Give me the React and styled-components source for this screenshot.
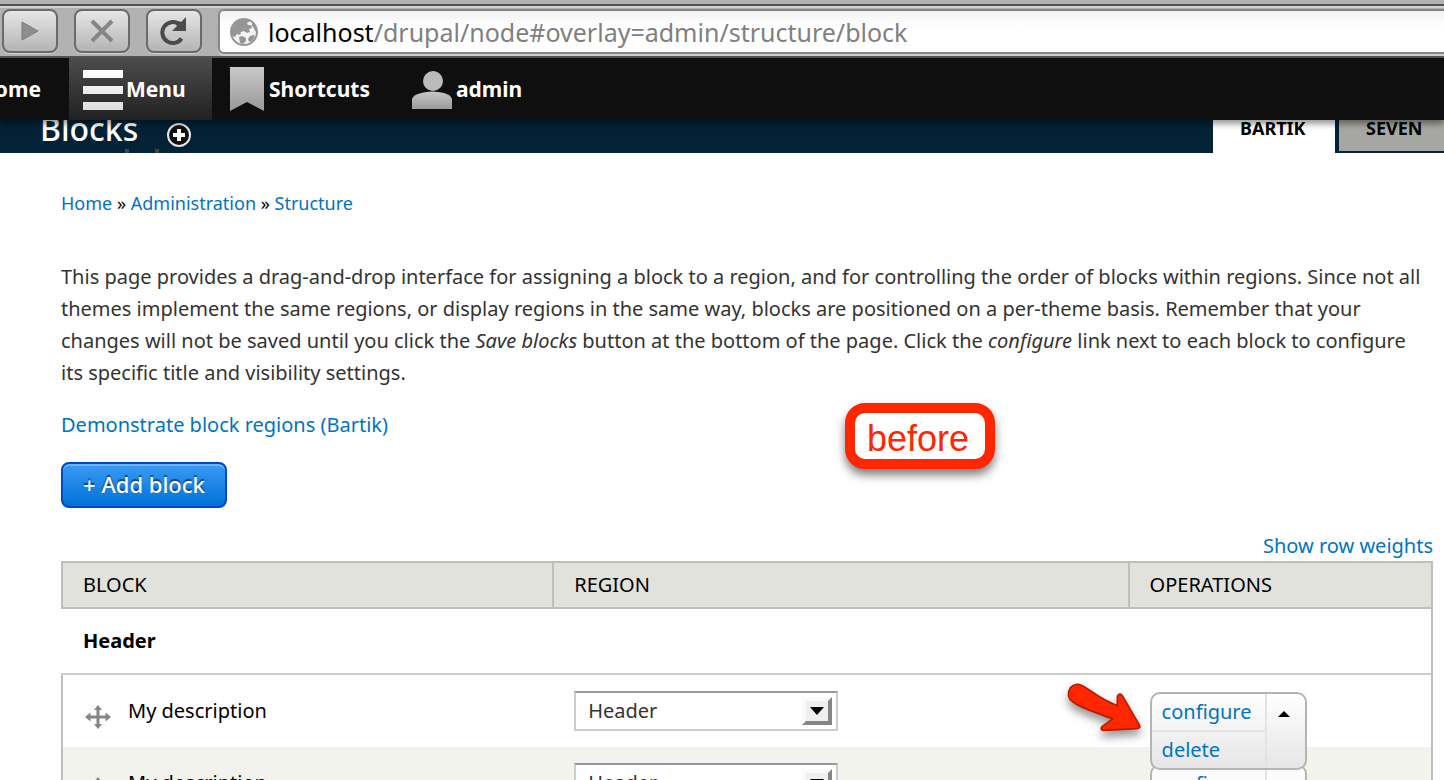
import React from 'react';
import styled, { createGlobalStyle } from 'styled-components';

const BLOCKS = [
  { id: 'block-1', name: 'My description', region: 'Header', open: true },
  { id: 'block-2', name: 'My description', region: 'Header', open: false },
];

const REGIONS = ['Header', 'Help', 'Featured', 'Content', 'Footer'];

const App = () => {
  return (
    <Page>
      <GlobalStyle />
      <BrowserBar />
      <AdminBar />
      <OverlayHeader>
        <PageTitle>Blocks</PageTitle>
        <AddShortcut type="button" aria-label="Add to shortcuts">
          <svg width="26" height="26" viewBox="0 0 26 26">
            <circle cx="13" cy="13" r="11" fill="#111" stroke="#e8e8e8" strokeWidth="2" />
            <path d="M13 7v12M7 13h12" stroke="#fff" strokeWidth="4" />
          </svg>
        </AddShortcut>
        <UnderlyingMarks aria-hidden="true" />
        <Tabs>
          <Tab href="#bartik" $active>BARTIK</Tab>
          <Tab href="#seven">SEVEN</Tab>
        </Tabs>
      </OverlayHeader>
      <Content>
        <Breadcrumb aria-label="Breadcrumb">
          <Link href="#home">Home</Link> » <Link href="#admin">Administration</Link> »{' '}
          <Link href="#structure">Structure</Link>
        </Breadcrumb>
        <HelpText>
          This page provides a drag-and-drop interface for assigning a block to a region, and for
          controlling the order of blocks within regions. Since not all
          <br />
          themes implement the same regions, or display regions in the same way, blocks are
          positioned on a per-theme basis. Remember that your
          <br />
          changes will not be saved until you click the <em>Save blocks</em> button at the bottom of
          the page. Click the <em>configure</em> link next to each block to configure
          <br />
          its specific title and visibility settings.
        </HelpText>
        <DemoLine>
          <Link href="#demo">Demonstrate block regions (Bartik)</Link>
          <Note>before</Note>
        </DemoLine>
        <AddButton type="button">+ Add block</AddButton>
        <WeightsLine>
          <Link href="#weights">Show row weights</Link>
        </WeightsLine>
        <BlockTable />
      </Content>
    </Page>
  );
};

const BrowserBar = () => (
  <Browser>
    <BrowserButton type="button" aria-label="Forward">
      <svg width="20" height="24" viewBox="0 0 20 24">
        <path d="M2 3L18 12L2 21Z" fill="#8e8e8e" stroke="#7b7b7b" />
      </svg>
    </BrowserButton>
    <BrowserButton type="button" aria-label="Stop">
      <svg width="26" height="26" viewBox="0 0 26 26">
        <path d="M3 3L23 23M23 3L3 23" stroke="#858585" strokeWidth="4" />
      </svg>
    </BrowserButton>
    <BrowserButton type="button" aria-label="Reload">
      <svg width="28" height="30" viewBox="0 0 28 30">
        <path d="M21.500 22.500A10.500 10.500 0 1 1 19 8" fill="none" stroke="#4a4a4a" strokeWidth="4" />
        <path d="M26 1V15H12L17 10L15.500 7.500L19 5L21 6Z" fill="#4a4a4a" />
      </svg>
    </BrowserButton>
    <Address>
      <svg width="28" height="28" viewBox="0 0 28 28" aria-hidden="true">
        <circle cx="14" cy="14" r="13" fill="#f4f4f4" stroke="#969696" strokeWidth="2" />
        <path d="M2 10L5 5L9 2L15 1L20 3L17 5L18 7L21 7L22 10L19 11L20 14L17 15L14 13L11 14L10 17L7 16L5 19L2 18L1 14Z" fill="#969696" />
        <path d="M22 4L26 9L27 14L25 13L24 10L22 8Z" fill="#969696" />
        <path d="M9 19L12 18L16 20L16 23L13 26L10 25Z" fill="#969696" />
        <path d="M20 18L24 17L25 19L22 23L19 24L18 21Z" fill="#969696" />
      </svg>
      <span>
        <b>localhost</b>/drupal/node#overlay=admin/structure/block
      </span>
    </Address>
  </Browser>
);

const AdminBar = () => (
  <Toolbar>
    <HomeItem href="#home">Home</HomeItem>
    <MenuItem href="#menu">
      <svg width="40" height="44" viewBox="0 0 40 44" aria-hidden="true">
        <linearGradient id="bars" x2="0" y2="1">
          <stop offset="0" stopColor="#fff" />
          <stop offset="1" stopColor="#ddd" />
        </linearGradient>
        <path d="M0 3H40V11H0ZM0 19H40V27H0ZM0 35H40V43H0Z" fill="url(#bars)" />
      </svg>
      Menu
    </MenuItem>
    <ShortcutItem href="#shortcuts">
      <svg width="34" height="44" viewBox="0 0 34 44" aria-hidden="true">
        <linearGradient id="metal" x2="0" y2="1">
          <stop offset="0" stopColor="#c8c8c8" />
          <stop offset="1" stopColor="#999" />
        </linearGradient>
        <path d="M0 0H34V44L17 35L0 44Z" fill="url(#metal)" />
      </svg>
      Shortcuts
    </ShortcutItem>
    <UserItem href="#user">
      <svg width="40" height="40" viewBox="0 0 40 40" aria-hidden="true">
        <circle cx="21" cy="12" r="10" fill="#bbb" />
        <path d="M0 40V30Q1 26 9 24Q15 22.500 20 22.500Q26 22.500 32 24Q39 26 40 30V40Z" fill="url(#metal)" />
      </svg>
      admin
    </UserItem>
  </Toolbar>
);

const BlockTable = () => (
  <Table>
    <colgroup>
      <Col $width="36%" />
      <Col $width="42%" />
      <Col $width="22%" />
    </colgroup>
    <thead>
      <tr>
        <Th>BLOCK</Th>
        <Th>REGION</Th>
        <Th>OPERATIONS</Th>
      </tr>
    </thead>
    <tbody>
      <tr>
        <RegionTitle colSpan={3}>Header</RegionTitle>
      </tr>
      {BLOCKS.map((block, i) => (
        <Row key={block.id} $even={i % 2 === 1}>
          <Td>
            <BlockName>
              <svg width="26" height="24" viewBox="0 0 26 24" aria-hidden="true">
                <path
                  d="M13 0L17 5H14.500V10.500H20.500V7.500L26 12L20.500 16.500V13.500H14.500V19H17L13 24L9 19H11.500V13.500H5.500V16.500L0 12L5.500 7.500V10.500H11.500V5H9Z"
                  fill="#858585"
                />
              </svg>
              <label htmlFor={block.id}>{block.name}</label>
            </BlockName>
          </Td>
          <Td>
            <SelectWrap>
              <Select id={block.id} defaultValue={block.region}>
                {REGIONS.map((region) => (
                  <option key={region}>{region}</option>
                ))}
              </Select>
              <SelectArrow>
                <svg width="14" height="8" viewBox="0 0 14 8">
                  <path d="M0 0H14L7 8Z" fill="#000" />
                </svg>
              </SelectArrow>
            </SelectWrap>
          </Td>
          <Td>
            <Operations>
              <DropButton $raised={block.open}>
                <DropLinks>
                  <DropLink href="#configure">configure</DropLink>
                  <DropLink href="#delete">delete</DropLink>
                </DropLinks>
                <DropToggle type="button" aria-label="List additional actions">
                  <svg width="12" height="6" viewBox="0 0 12 6">
                    <path d="M0 6L6 0L12 6Z" fill="#000" />
                  </svg>
                </DropToggle>
              </DropButton>
              {block.open && (
                <Pointer width="75" height="50" viewBox="50 70 225 150" aria-hidden="true">
                  <path
                    d="M60 84C68 73 83 72 96 78C120 90 142 115 201 138V112C201 103 211 100 216 108L267 196C271 203 267 206 260 207L160 212C152 212 150 206 155 201L187 178C145 160 95 148 68 127C51 116 51 98 60 84Z"
                    fill="#ff2600"
                    stroke="#b81c00"
                    strokeWidth="5"
                  />
                </Pointer>
              )}
            </Operations>
          </Td>
        </Row>
      ))}
    </tbody>
  </Table>
);

const GlobalStyle = createGlobalStyle`
  * {
    box-sizing: border-box;
  }

  body {
    margin: 0;
    background: #fff;
    color: #000;
    font: 20px/32px 'Noto Sans', 'Open Sans', sans-serif;
  }

  svg {
    display: block;
    flex: none;
  }

  button,
  select {
    font: inherit;
  }
`;

const Page = styled.div`
  height: 100vh;
  overflow: hidden;
`;

const Browser = styled.div`
  display: flex;
  gap: 16px;
  height: 58px;
  padding: 9px 0 0 2px;
  background: linear-gradient(#b2b2b2 4px, #555 4px, #555 6px, #d0d0d0 6px, #d0d0d0 8px, #b2b2b2 8px);
  border-bottom: 2px solid #555;
`;

const BrowserButton = styled.button`
  display: flex;
  flex: none;
  align-items: center;
  justify-content: center;
  width: 56px;
  height: 44px;
  padding: 0;
  border: 2px solid #6a6a6a;
  border-radius: 8px;
  background: linear-gradient(#e6e6e6, #b4b4b4);
  box-shadow: 0 1px 0 #d0d0d0;
`;

const Address = styled.div`
  display: flex;
  flex: 1;
  align-items: center;
  gap: 10px;
  height: 45px;
  padding-left: 10px;
  border: 2px solid #858585;
  border-right: 0;
  border-radius: 6px 0 0 6px;
  background: linear-gradient(#f2f2f2, #fff 16px);
  box-shadow: 0 2px 0 #d0d0d0;
  color: #808080;
  font-size: 25px;
  white-space: nowrap;

  b {
    color: #000;
    font-weight: 400;
  }
`;

const Toolbar = styled.nav`
  position: relative;
  display: flex;
  height: 62px;
  background: #0f0f0f;
  box-shadow: 0 4px 6px rgba(0, 0, 0, 0.4);
`;

const ToolbarItem = styled.a`
  display: flex;
  align-items: center;
  color: #fff;
  font-size: 21px;
  font-weight: 700;
  text-decoration: none;
`;

const HomeItem = styled(ToolbarItem)`
  justify-content: flex-end;
  width: 69px;
  padding-right: 28px;
`;

const MenuItem = styled(ToolbarItem)`
  gap: 3px;
  width: 143px;
  padding-left: 14px;
  background: linear-gradient(#4c4c4c, #212121);
`;

const ShortcutItem = styled(ToolbarItem)`
  gap: 5px;
  width: 200px;
  padding-left: 18px;
`;

const UserItem = styled(ToolbarItem)`
  gap: 4px;
`;

const OverlayHeader = styled.header`
  display: flex;
  align-items: flex-end;
  height: 33px;
  padding-left: 40px;
  overflow: hidden;
  background: #032235;
`;

const PageTitle = styled.h1`
  margin: 0;
  padding-bottom: 4px;
  color: #fff;
  font-size: 32px;
  font-weight: 500;
  line-height: 40px;
`;

const AddShortcut = styled.button`
  margin-left: 28px;
  padding: 0 0 5px;
  border: 0;
  background: none;
`;

/* ascenders of the page that lies behind the overlay */
const UnderlyingMarks = styled.span`
  width: 34px;
  height: 4px;
  margin-left: -67px;
  border: solid #444;
  border-width: 0 4px;
`;

const Tabs = styled.div`
  display: flex;
  align-self: stretch;
  margin-left: auto;
`;

const Tab = styled.a`
  width: ${(props) => (props.$active ? '122px' : '109px')};
  padding-left: 27px;
  border: solid #032235;
  border-width: ${(props) => (props.$active ? '0' : '0 0 2px 4px')};
  background: ${(props) => (props.$active ? '#fff' : '#a6a7a2')};
  color: #000;
  font-size: 18px;
  font-weight: 700;
  line-height: 16px;
  text-decoration: none;
`;

const Content = styled.main`
  padding: 34px 11px 0 61px;
`;

const Link = styled.a`
  color: #0074bd;
  text-decoration: none;
`;

const Breadcrumb = styled.nav`
  font-size: 18px;
`;

const HelpText = styled.p`
  margin: 42px 0 20px;
  color: #333;
  white-space: nowrap;
`;

const DemoLine = styled.div`
  position: relative;
`;

const Note = styled.div`
  position: absolute;
  left: 784px;
  top: -6px;
  width: 150px;
  height: 66px;
  padding-right: 4px;
  border: 10px solid #ff2600;
  border-radius: 20px;
  box-shadow: 0 6px 10px rgba(0, 0, 0, 0.5);
  background: #fff;
  color: #ff2600;
  font: 36px/52px 'Liberation Sans', sans-serif;
  text-align: center;
`;

const AddButton = styled.button`
  display: block;
  width: 166px;
  height: 46px;
  margin-top: 21px;
  padding: 0 0 2px;
  border: 2px solid #0048c8;
  border-radius: 8px;
  background: linear-gradient(#3b9bf5, #0071d8);
  box-shadow: inset 0 2px 0 #6db5f8;
  color: #fff;
  font-size: 22px;
  font-weight: 500;
  text-shadow: 0 -2px 1px rgba(0, 0, 0, 0.5);
`;

const WeightsLine = styled.div`
  margin-top: 22px;
  text-align: right;
`;

const Table = styled.table`
  width: 100%;
  table-layout: fixed;
  margin-top: -1px;
  border: solid #bebfb9;
  border-width: 2px 2px 2px 0;
  border-spacing: 0;
`;

const Col = styled.col`
  width: ${(props) => props.$width};
`;

const Th = styled.th`
  height: 46px;
  padding: 0 20px;
  border-right: 2px solid #bebfb9;
  border-bottom: 2px solid #bebfb9;
  background: #e1e2dc;
  font-weight: 400;
  text-align: left;

  &:first-child {
    border-left: 2px solid #bebfb9;
  }

  &:last-child {
    border-right: 0;
  }
`;

const RegionTitle = styled.td`
  height: 66px;
  padding: 0 22px;
  border-bottom: 2px solid #ccc;
  font-weight: 700;
`;

const Row = styled.tr`
  background: ${(props) => (props.$even ? '#f2f3ed' : '#fff')};
`;

const Td = styled.td`
  height: 72px;
  padding: 0 20px;

  &:first-child {
    border-left: 2px solid #bebfb9;
  }
`;

const BlockName = styled.div`
  display: flex;
  align-items: center;
  gap: 17px;
  padding-left: 2px;

  svg {
    margin-top: 12px;
  }
`;

const SelectWrap = styled.div`
  position: relative;
  width: 264px;
`;

const Select = styled.select`
  display: block;
  width: 100%;
  height: 40px;
  padding: 0 12px;
  appearance: none;
  border: 2px solid #ccc;
  border-top-color: #999;
  border-radius: 0;
  background: #fff;
  color: #333;
`;

const SelectArrow = styled.span`
  position: absolute;
  top: 6px;
  right: 6px;
  display: flex;
  align-items: center;
  justify-content: center;
  width: 30px;
  height: 28px;
  border: 4px solid;
  border-color: #fafafa #858585 #858585 #fafafa;
  background: #efefef;
  pointer-events: none;
`;

const Operations = styled.div`
  position: relative;
  height: 38px;
`;

const DropButton = styled.div`
  position: absolute;
  top: 0;
  left: 0;
  z-index: ${(props) => (props.$raised ? 2 : 1)};
  display: flex;
  width: 157px;
  height: 78px;
  border: 2px solid #b4b4b4;
  border-radius: 10px;
  overflow: hidden;
  background: linear-gradient(#fff, #e6e6e6);
`;

const DropLinks = styled.div`
  width: 115px;
  border-right: 2px solid #e3e3e3;
`;

const DropLink = styled(Link)`
  display: block;
  height: 36px;
  padding-left: 10px;
  line-height: 36px;

  & + & {
    height: 38px;
    border-top: 2px solid #e3e3e3;
  }
`;

const DropToggle = styled.button`
  display: flex;
  flex: 1;
  padding: 17px 0 0 11px;
  border: 0;
  background: none;
`;

const Pointer = styled.svg`
  position: absolute;
  top: -9px;
  right: calc(100% + 8px);
  overflow: visible;
  filter: drop-shadow(0 6px 4px rgba(0, 0, 0, 0.4));
`;

export default App;
